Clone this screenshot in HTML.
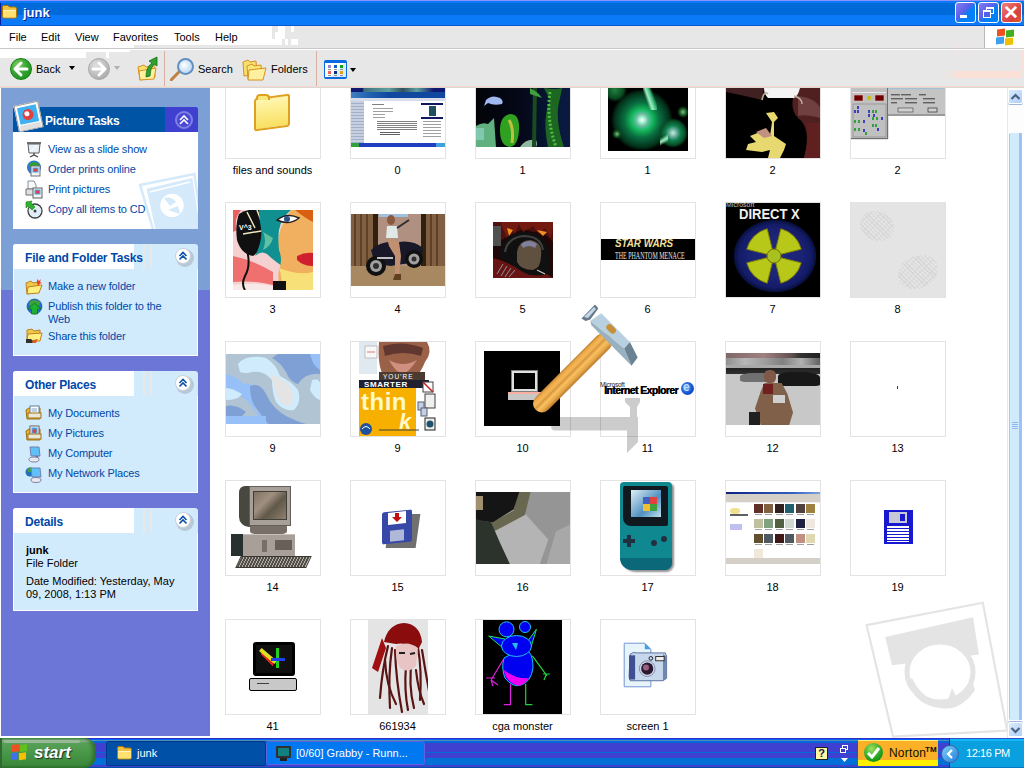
<!DOCTYPE html><html><head><meta charset="utf-8"><style>
*{margin:0;padding:0;box-sizing:border-box}
html,body{width:1024px;height:768px;overflow:hidden;background:#fff;font-family:"Liberation Sans",sans-serif;font-size:11px;color:#000;position:relative}
div,span,svg{position:absolute}
.t{white-space:nowrap;line-height:13px}
#title{left:0;top:0;width:1024px;height:26px;background:linear-gradient(to bottom,#9090f8 0,#9090f8 1px,#0a7af8 1px,#0a7af8 3px,#006ad8 3px,#006ad8 15px,#0a7af8 15px,#0a7af8 25px,#0058d0 25px)}
.wb{top:2px;width:21px;height:21px;border:1px solid #fff;border-radius:3px}
#menu{left:0;top:26px;width:1024px;height:22px;background:#e7e7e7}
#tb{left:0;top:50px;width:1024px;height:37px;background:#e7e7e7}
#left{left:1px;top:88px;width:209px;height:650px;background:linear-gradient(to bottom,#7ca0d6 0,#7ca0d6 202px,#6c76d6 202px)}
.box{left:13px;width:185px;background:#d2ebfc;border-left:1px solid #fff;border-right:1px solid #fff;border-bottom:1px solid #fff}
.hdr{left:13px;width:185px;height:25px;border-radius:3px 3px 0 0;background:#d2ebfc}
.ht{font-weight:bold;font-size:12px;color:#0048a8;letter-spacing:-0.2px}
.lk{color:#0048a8;font-size:11px;left:48px;letter-spacing:-0.15px}
.th{width:96px;height:96px;border:1px solid #e3e3e3;background:#fff;overflow:hidden}
.lb{width:125px;text-align:center;font-size:11px}
#task{left:0;top:738px;width:1024px;height:30px;background:linear-gradient(to bottom,#3030c8 0,#3030c8 1px,#0060f8 1px,#0060f8 2px,#5090b8 2px,#5090b8 3px,#0068d8 3px,#0068d8 5px,#4040d0 5px,#4040d0 14px,#0068d8 14px,#0068d8 15px,#4040d0 15px,#4040d0 20px,#0070d8 20px,#0070d8 27px,#4040d0 27px,#4040d0 29px,#0050a8 29px)}
</style></head><body>
<div id="title"></div>
<div style="left:0;top:3px;width:1px;height:22px;background:#0020a0"></div>
<svg style="left:1px;top:4px" width="18" height="15" viewBox="0 0 18 15"><path d="M1.5 3 Q1.5 1.5 3 1.5 H7 L8.5 3 H14 Q15.5 3 15.5 4.5 V12.5 Q15.5 14 14 14 H3 Q1.5 14 1.5 12.5 Z" fill="#f0c040" stroke="#b07800"/><path d="M2 6 H15 V12.5 Q15 13.5 14 13.5 H3 Q2 13.5 2 12.5 Z" fill="#ffe070"/><path d="M2.5 6.5 H14.5" stroke="#fff8c0"/></svg>
<div class="t" style="left:23px;top:5px;font-size:13px;font-weight:bold;color:#fff;line-height:16px;text-shadow:1px 1px 0 #0a1878">junk</div>
<div class="wb" style="left:955px;background:linear-gradient(135deg,#8080f8 0,#6060e8 40%,#0080f8 60%,#0080f8 100%)"><div style="left:4px;top:12px;width:7px;height:3px;background:#fff"></div></div>
<div class="wb" style="left:978px;background:linear-gradient(135deg,#8080f8 0,#6060e8 40%,#0080f8 60%,#0080f8 100%)"><div style="left:7px;top:4px;width:8px;height:7px;border:1px solid #fff;border-top-width:2px"></div><div style="left:4px;top:7px;width:8px;height:8px;border:1px solid #fff;border-top-width:2px;background:#5060e8"></div></div>
<div class="wb" style="left:1001px;background:linear-gradient(135deg,#f08080 0,#e05050 45%,#d84040 70%,#e06020 100%)"><span style="left:1px;top:0px;font-size:19px;line-height:19px;color:#fff;font-weight:bold">&#x2715;</span></div>
<div id="menu"></div>
<div style="left:0px;top:26px;width:134px;height:22px;background:#fff"></div>
<div style="left:134px;top:26px;width:138px;height:19px;background:#fff"></div>
<div style="left:278px;top:26px;width:7px;height:13px;background:#fff"></div>
<div style="left:275px;top:32px;width:3px;height:7px;background:#fff"></div>
<div style="left:272px;top:39px;width:10px;height:6px;background:#fff"></div>
<div style="left:285px;top:39px;width:3px;height:6px;background:#fff"></div>
<div style="left:291px;top:26px;width:3px;height:6px;background:#fff"></div>
<div style="left:291px;top:39px;width:7px;height:6px;background:#fff"></div>
<div style="left:0;top:48px;width:1024px;height:1px;background:#c8c8c8"></div>
<div style="left:0;top:49px;width:1024px;height:1px;background:#fff"></div>
<div class="t" style="left:9px;top:31px">File</div>
<div class="t" style="left:41px;top:31px">Edit</div>
<div class="t" style="left:75px;top:31px">View</div>
<div class="t" style="left:113px;top:31px">Favorites</div>
<div class="t" style="left:174px;top:31px">Tools</div>
<div class="t" style="left:215px;top:31px">Help</div>
<div style="left:984px;top:26px;width:1px;height:22px;background:#b8b8b8"></div>
<div style="left:985px;top:26px;width:39px;height:22px;background:#fff"></div>
<div style="left:997px;top:29px;width:8px;height:7px;background:#f05020;transform:skewY(-8deg)"></div>
<div style="left:1006px;top:30px;width:8px;height:7px;background:#40b020;transform:skewY(-8deg)"></div>
<div style="left:996px;top:37px;width:8px;height:7px;background:#40a0f0;transform:skewY(-8deg)"></div>
<div style="left:1005px;top:38px;width:8px;height:7px;background:#f0c000;transform:skewY(-8deg)"></div>
<div id="tb"></div>
<div style="left:0;top:50px;width:86px;height:8px;background:#fff"></div>
<div style="left:86px;top:50px;width:44px;height:2px;background:#fff"></div><div style="left:106px;top:52px;width:3px;height:6px;background:#fff"></div>
<div style="left:0;top:86px;width:1024px;height:1px;background:#f8d8c8"></div>
<div style="left:0;top:87px;width:1024px;height:1px;background:#d8d8d8"></div>
<div style="left:10px;top:58px;width:22px;height:22px;border-radius:50%;background:radial-gradient(circle at 35% 30%,#80d060 0,#30a030 50%,#109010 100%);border:1px solid #108010"></div>
<svg style="left:10px;top:58px" width="22" height="22"><path d="M11 5 L5 11 L11 17 M5 11 L17 11" stroke="#fff" stroke-width="3" fill="none" stroke-linecap="round" stroke-linejoin="round"/></svg>
<div class="t" style="left:36px;top:63px">Back</div>
<svg style="left:69px;top:66px" width="6" height="4"><path d="M0 0 L6 0 L3 4 Z" fill="#000"/></svg>
<div style="left:88px;top:58px;width:22px;height:22px;border-radius:50%;background:radial-gradient(circle at 35% 30%,#e0e0e0 0,#b8b8b8 60%,#a0a0a0 100%);border:1px solid #a8a8a8"></div>
<svg style="left:88px;top:58px" width="22" height="22"><path d="M11 5 L17 11 L11 17 M17 11 L5 11" stroke="#fff" stroke-width="3" fill="none" stroke-linecap="round" stroke-linejoin="round"/></svg>
<svg style="left:114px;top:66px" width="6" height="4"><path d="M0 0 L6 0 L3 4 Z" fill="#b0b0b0"/></svg>
<svg style="left:136px;top:55px" width="24" height="27" viewBox="0 0 24 27"><path d="M2 12 L8 10 L10 12 L18 10 L19 22 L4 25 Z" fill="#f8e070" stroke="#d89020" stroke-width="1"/><path d="M3 16 L20 13 L18 24 L4 25 Z" fill="#fff0a0" stroke="#d89020" stroke-width="1"/><path d="M10 22 Q10 12 16 8 L13 6 L21 2 L21 11 L18 9 Q14 13 14 21 Z" fill="#30a030" stroke="#107010" stroke-width="0.8"/></svg>
<div style="left:164px;top:51px;width:1px;height:35px;background:#d8b0a0"></div>
<div style="left:177px;top:58px;width:17px;height:17px;border-radius:50%;background:radial-gradient(circle at 40% 40%,#fff 0,#c8e0f8 60%);border:2px solid #6090c0"></div>
<svg style="left:170px;top:71px" width="10" height="10"><path d="M9 1 L1 9" stroke="#c08040" stroke-width="3" stroke-linecap="round"/></svg>
<div class="t" style="left:198px;top:63px">Search</div>
<svg style="left:242px;top:59px" width="26" height="23" viewBox="0 0 26 23"><path d="M1 3 L6 1 L8 3 L14 2 L15 15 L2 17 Z" fill="#f8e070" stroke="#d89020"/><path d="M5 7 L10 5 L12 7 L19 6 L20 18 L6 20 Z" fill="#f8e878" stroke="#d89020"/><path d="M7 11 L24 9 L21 21 L6 21 Z" fill="#fff0a0" stroke="#d89020"/></svg>
<div class="t" style="left:271px;top:63px">Folders</div>
<div style="left:316px;top:51px;width:1px;height:35px;background:#d8b0a0"></div>
<div style="left:324px;top:60px;width:23px;height:19px;background:linear-gradient(135deg,#fff 55%,#d8ecfc 56%);border:1px solid #0a6ae0;border-top-width:3px;border-bottom-width:2px;border-radius:2px"></div>
<div style="left:328px;top:65px;width:3px;height:3px;background:#a080d0"></div><div style="left:328px;top:69px;width:3px;height:1px;background:#909090"></div>
<div style="left:334px;top:65px;width:3px;height:3px;background:#0a60d0"></div><div style="left:334px;top:69px;width:3px;height:1px;background:#909090"></div>
<div style="left:340px;top:65px;width:3px;height:3px;background:#10a020"></div><div style="left:340px;top:69px;width:3px;height:1px;background:#909090"></div>
<div style="left:328px;top:71px;width:3px;height:3px;background:#f06060"></div><div style="left:328px;top:75px;width:3px;height:1px;background:#909090"></div>
<div style="left:334px;top:71px;width:3px;height:3px;background:#083080"></div><div style="left:334px;top:75px;width:3px;height:1px;background:#909090"></div>
<div style="left:340px;top:71px;width:3px;height:3px;background:#e0a010"></div><div style="left:340px;top:75px;width:3px;height:1px;background:#909090"></div>
<svg style="left:350px;top:68px" width="6" height="4"><path d="M0 0 L6 0 L3 4 Z" fill="#000"/></svg>
<div style="left:954px;top:71px;width:67px;height:7px;background:#fbe0d8"></div><div style="left:947px;top:71px;width:3px;height:7px;background:#fbe0d8"></div><div style="left:1021px;top:50px;width:3px;height:21px;background:#fbe0d8"></div><div style="left:957px;top:45px;width:3px;height:2px;background:#fbe0d8"></div><div style="left:963px;top:45px;width:3px;height:2px;background:#fbe0d8"></div><div style="left:957px;top:50px;width:3px;height:2px;background:#fbe0d8"></div><div style="left:963px;top:50px;width:3px;height:2px;background:#fbe0d8"></div>
<div id="left"></div>
<div style="left:0;top:88px;width:1px;height:650px;background:#fff"></div>
<div style="left:13px;top:107px;width:185px;height:25px;background:#0054a6;border-radius:3px 3px 0 0"></div>
<div style="left:165px;top:107px;width:33px;height:25px;background:#4040d0;border-radius:0 3px 0 0"></div>
<div style="left:175px;top:111px;width:18px;height:18px;border-radius:50%;border:2px solid #8080e0;background:#4848d8"></div>
<svg style="left:178px;top:114px" width="12" height="12"><path d="M2 6 L6 2 L10 6 M2 10 L6 6 L10 10" stroke="#fff" stroke-width="1.6" fill="none"/></svg>
<div class="t ht" style="left:45px;top:115px;color:#fff">Picture Tasks</div>
<div style="left:13px;top:132px;width:185px;height:97px;background:#fff"></div>
<div style="left:16px;top:103px;width:25px;height:27px;background:#fff;border:1px solid #a0a0a0;transform:rotate(-12deg)"><div style="left:2px;top:2px;width:19px;height:17px;background:#40b0f0"></div><div style="left:6px;top:5px;width:11px;height:11px;border-radius:50%;background:#e04040"></div><div style="left:8px;top:7px;width:5px;height:5px;border-radius:50%;background:#fff"></div><div style="left:1px;top:20px;width:21px;height:5px;background:#e0e0e0"></div></div>
<svg style="left:13px;top:132px" width="185" height="97" viewBox="13 132 185 97"><path d="M140.1 184.9 L194.4 174.1 L202 228 L153.4 231 Z" fill="none" stroke="#d4eafa" stroke-width="2.5"/><path d="M146.6 188.8 L192.4 178 L200 229 L155.4 229 Z" fill="#d4eafa"/><path d="M150 192 L190 182" stroke="#fff" stroke-width="1.5"/><circle cx="172" cy="205.4" r="11.7" fill="#fff"/><path d="M164 198 Q172 196 176 202 L170 206 Z M168 210 L178 206 L180 214 Z" fill="#d4eafa"/></svg>
<div class="t lk" style="top:143px">View as a slide show</div>
<div class="t lk" style="top:163px">Order prints online</div>
<div class="t lk" style="top:183px">Print pictures</div>
<div class="t lk" style="top:203px">Copy all items to CD</div>
<svg style="left:26px;top:141px" width="16" height="17" viewBox="0 0 16 17"><rect x="1" y="1" width="14" height="2" fill="#707070"/><path d="M2 3 H14 L13 12 H3 Z" fill="#e8f0f8" stroke="#606060"/><path d="M4 11 L11 4" stroke="#fff"/><path d="M8 12 V14 M8 14 L4 16 M8 14 L12 16" stroke="#404040" stroke-width="1.3"/></svg>
<svg style="left:26px;top:160px" width="17" height="17" viewBox="0 0 17 17"><circle cx="8" cy="7.5" r="7" fill="#2a7ad0"/><path d="M3 4 Q8 0 13 4 L12 7 Q8 5 5 8 Z" fill="#30a030"/><rect x="5" y="6" width="9" height="10" fill="#f4f4f4" stroke="#707070"/><rect x="6.5" y="7.5" width="6" height="5" fill="#4aa0e0"/><circle cx="9.5" cy="10" r="1.8" fill="#e04040"/></svg>
<svg style="left:25px;top:180px" width="18" height="19" viewBox="0 0 18 19"><path d="M3 1 H9 L11 5 V9 H3 Z" fill="#f8f8f8" stroke="#8090a0"/><path d="M1 9 H12 V15 H1 Z" fill="#e0e0e0" stroke="#707070"/><rect x="8" y="8" width="9" height="10" fill="#f4f4f4" stroke="#606060"/><rect x="9.5" y="9.5" width="6" height="5" fill="#4aa0e0"/><circle cx="12.5" cy="12" r="1.8" fill="#e04040"/></svg>
<svg style="left:25px;top:200px" width="18" height="19" viewBox="0 0 18 19"><circle cx="10" cy="11" r="7" fill="#e0eef8" stroke="#404040" stroke-width="1.3"/><circle cx="10" cy="11" r="1.5" fill="#404040"/><path d="M1 2 L7 1 L6 3 L10 7 L7 10 L3 6 L1 8 Z" fill="#30b030" stroke="#108010" stroke-width="0.6"/></svg>
<div style="left:13px;top:244px;width:185px;height:25px;background:#d2ebfc;border-radius:3px 3px 0 0"></div>
<div style="left:13px;top:244px;width:121px;height:25px;background:#fff;border-radius:3px 0 0 0"></div>
<div style="left:143px;top:244px;width:2px;height:25px;background:#e8e8e8"></div>
<div style="left:150px;top:244px;width:2px;height:25px;background:#e8e8e8"></div>
<div class="t ht" style="left:25px;top:252px">File and Folder Tasks</div>
<div style="left:176px;top:249px;width:18px;height:18px;border-radius:50%;background:#b8c8d8"></div>
<div style="left:175px;top:248px;width:16px;height:16px;border-radius:50%;background:#fff;border:1px solid #c8d0d8"></div>
<svg style="left:177px;top:250px" width="12" height="12"><path d="M2.5 6 L6 2.5 L9.5 6 M2.5 9.5 L6 6 L9.5 9.5" stroke="#0a50a8" stroke-width="1.6" fill="none"/></svg>
<div style="left:13px;top:269px;width:185px;height:87px;background:#d2ebfc;border:1px solid #fff;border-top:0"></div>
<div class="t lk" style="top:280px">Make a new folder</div>
<div class="t lk" style="top:300px">Publish this folder to the</div>
<div class="t lk" style="top:313px">Web</div>
<div class="t lk" style="top:330px">Share this folder</div>
<svg style="left:25px;top:278px" width="18" height="17" viewBox="0 0 18 17"><path d="M1 5 L6 3 L8 5 L14 4 L14 14 L2 16 Z" fill="#f0c848" stroke="#c08020"/><path d="M3 9 L17 7 L14 15 L2 16 Z" fill="#fff080" stroke="#c08020"/><path d="M12 1 L14 3 L16 1 L15 4 L17 5 L14 6 L13 8 L12 5 Z" fill="#f04020"/></svg>
<svg style="left:26px;top:298px" width="17" height="18" viewBox="0 0 17 18"><circle cx="8.5" cy="8.5" r="7.5" fill="#2070d0" stroke="#204080" stroke-width="0.6"/><path d="M3 4 Q8 0 14 4 L13 8 L8 6 L4 9 Z" fill="#40a040"/><path d="M8.5 5 L15 11 H11.5 V16 H5.5 V11 H2 Z" fill="#20b030" stroke="#0a7010" stroke-width="0.7"/></svg>
<svg style="left:25px;top:328px" width="18" height="16" viewBox="0 0 18 16"><path d="M2 2 L7 1 L9 3 L15 2 L15 12 L2 13 Z" fill="#f0c848" stroke="#c08020"/><path d="M3 6 L17 5 L15 13 L2 13 Z" fill="#fff080" stroke="#c08020"/><path d="M1 11 H6 L8 13 L12 12 L10 15 H1 Z" fill="#303030"/><path d="M8 12 L13 11 L11 15 H7 Z" fill="#e06020"/></svg>
<div style="left:13px;top:371px;width:185px;height:25px;background:#d2ebfc;border-radius:3px 3px 0 0"></div>
<div style="left:13px;top:371px;width:121px;height:25px;background:#fff;border-radius:3px 0 0 0"></div>
<div style="left:143px;top:371px;width:2px;height:25px;background:#e8e8e8"></div>
<div style="left:150px;top:371px;width:2px;height:25px;background:#e8e8e8"></div>
<div class="t ht" style="left:25px;top:379px">Other Places</div>
<div style="left:176px;top:376px;width:18px;height:18px;border-radius:50%;background:#b8c8d8"></div>
<div style="left:175px;top:375px;width:16px;height:16px;border-radius:50%;background:#fff;border:1px solid #c8d0d8"></div>
<svg style="left:177px;top:377px" width="12" height="12"><path d="M2.5 6 L6 2.5 L9.5 6 M2.5 9.5 L6 6 L9.5 9.5" stroke="#0a50a8" stroke-width="1.6" fill="none"/></svg>
<div style="left:13px;top:396px;width:185px;height:97px;background:#d2ebfc;border:1px solid #fff;border-top:0"></div>
<div class="t lk" style="top:407px">My Documents</div>
<div class="t lk" style="top:427px">My Pictures</div>
<div class="t lk" style="top:447px">My Computer</div>
<div class="t lk" style="top:467px">My Network Places</div>
<svg style="left:25px;top:405px" width="18" height="16" viewBox="0 0 18 16"><path d="M1 5 L4 3 H15 V14 H2 Z" fill="#f0b030" stroke="#a07010"/><rect x="5" y="1" width="9" height="9" fill="#fff" stroke="#6080a0"/><path d="M6.5 4 H12 M6.5 6 H12" stroke="#80a0c0"/><rect x="3" y="8" width="13" height="5" fill="#e8e8d8" stroke="#a07010"/></svg>
<svg style="left:25px;top:425px" width="18" height="17" viewBox="0 0 18 17"><path d="M1 6 L4 4 H15 V15 H2 Z" fill="#f0b030" stroke="#a07010"/><rect x="5" y="1" width="9" height="9" fill="#fff" stroke="#606060"/><rect x="6.5" y="2.5" width="6" height="6" fill="#40a0f0"/><circle cx="9.5" cy="6" r="2" fill="#e04040"/><rect x="3" y="9" width="13" height="5" fill="#e8e8d8" stroke="#a07010"/></svg>
<svg style="left:27px;top:446px" width="15" height="17" viewBox="0 0 15 17"><path d="M3 1 H12 L13 10 H4 Z" fill="#60c0f8" stroke="#7080b0"/><path d="M9 10 L11 12" stroke="#6060a0" stroke-width="2"/><ellipse cx="7" cy="13.5" rx="5" ry="2.5" fill="#e8e8f0" stroke="#8080a0"/></svg>
<svg style="left:25px;top:466px" width="18" height="17" viewBox="0 0 18 17"><circle cx="5" cy="6" r="4.5" fill="#2070c0"/><path d="M2 3 Q5 0 9 3 L7 6 L3 6 Z" fill="#40a040"/><path d="M6 2 H15 L16 11 H7 Z" fill="#60c0f8" stroke="#7080b0"/><ellipse cx="11" cy="14" rx="5" ry="2.5" fill="#e8e8f0" stroke="#8080a0"/></svg>
<div style="left:13px;top:508px;width:185px;height:25px;background:#d2ebfc;border-radius:3px 3px 0 0"></div>
<div style="left:13px;top:508px;width:121px;height:25px;background:#fff;border-radius:3px 0 0 0"></div>
<div style="left:143px;top:508px;width:2px;height:25px;background:#e8e8e8"></div>
<div style="left:150px;top:508px;width:2px;height:25px;background:#e8e8e8"></div>
<div class="t ht" style="left:25px;top:516px">Details</div>
<div style="left:176px;top:513px;width:18px;height:18px;border-radius:50%;background:#b8c8d8"></div>
<div style="left:175px;top:512px;width:16px;height:16px;border-radius:50%;background:#fff;border:1px solid #c8d0d8"></div>
<svg style="left:177px;top:514px" width="12" height="12"><path d="M2.5 6 L6 2.5 L9.5 6 M2.5 9.5 L6 6 L9.5 9.5" stroke="#0a50a8" stroke-width="1.6" fill="none"/></svg>
<div style="left:13px;top:533px;width:185px;height:78px;background:#d2ebfc;border:1px solid #fff;border-top:0"></div>
<div class="t" style="left:26px;top:544px;font-weight:bold">junk</div>
<div class="t" style="left:26px;top:557px">File Folder</div>
<div class="t" style="left:26px;top:575px">Date Modified: Yesterday, May</div>
<div class="t" style="left:26px;top:588px">09, 2008, 1:13 PM</div>
<div style="left:1px;top:736px;width:209px;height:2px;background:#fff"></div>
<div style="left:210px;top:88px;width:797px;height:650px;background:#fff;overflow:hidden" id="content">
<svg style="left:640px;top:502px" width="160" height="150" viewBox="850 590 160 150"><path d="M866.6 625.2 L982.8 602.7 L1007.2 730.6 L893 736.5 Z" fill="none" stroke="#e4e4e4" stroke-width="2.2"/><path d="M885.2 636.9 L973 617.3 L978.9 654.5 L892 665.2 Z" fill="#e4e4e4"/><ellipse cx="940" cy="672" rx="33" ry="30" fill="#fff" stroke="#e4e4e4" stroke-width="5"/><path d="M912 678 Q925 705 948 700 L952 688 L958 700 Q968 692 972 680 L975 690 Q960 712 940 708 Q915 705 908 682 Z" fill="#e4e4e4"/></svg>
<div class="th" style="left:15px;top:-25px"></div>
<div class="t lb" style="left:0px;top:76px">files and sounds</div>
<div class="th" style="left:140px;top:-25px"></div>
<div class="t lb" style="left:125px;top:76px">0</div>
<div class="th" style="left:265px;top:-25px"></div>
<div class="t lb" style="left:250px;top:76px">1</div>
<div class="th" style="left:390px;top:-25px"></div>
<div class="t lb" style="left:375px;top:76px">1</div>
<div class="th" style="left:515px;top:-25px"></div>
<div class="t lb" style="left:500px;top:76px">2</div>
<div class="th" style="left:640px;top:-25px"></div>
<div class="t lb" style="left:625px;top:76px">2</div>
<div class="th" style="left:15px;top:114px"></div>
<div class="t lb" style="left:0px;top:215px">3</div>
<div class="th" style="left:140px;top:114px"></div>
<div class="t lb" style="left:125px;top:215px">4</div>
<div class="th" style="left:265px;top:114px"></div>
<div class="t lb" style="left:250px;top:215px">5</div>
<div class="th" style="left:390px;top:114px"></div>
<div class="t lb" style="left:375px;top:215px">6</div>
<div class="th" style="left:515px;top:114px"></div>
<div class="t lb" style="left:500px;top:215px">7</div>
<div class="th" style="left:640px;top:114px"></div>
<div class="t lb" style="left:625px;top:215px">8</div>
<div class="th" style="left:15px;top:253px"></div>
<div class="t lb" style="left:0px;top:354px">9</div>
<div class="th" style="left:140px;top:253px"></div>
<div class="t lb" style="left:125px;top:354px">9</div>
<div class="th" style="left:265px;top:253px"></div>
<div class="t lb" style="left:250px;top:354px">10</div>
<div class="th" style="left:390px;top:253px"></div>
<div class="t lb" style="left:375px;top:354px">11</div>
<div class="th" style="left:515px;top:253px"></div>
<div class="t lb" style="left:500px;top:354px">12</div>
<div class="th" style="left:640px;top:253px"></div>
<div class="t lb" style="left:625px;top:354px">13</div>
<div class="th" style="left:15px;top:392px"></div>
<div class="t lb" style="left:0px;top:493px">14</div>
<div class="th" style="left:140px;top:392px"></div>
<div class="t lb" style="left:125px;top:493px">15</div>
<div class="th" style="left:265px;top:392px"></div>
<div class="t lb" style="left:250px;top:493px">16</div>
<div class="th" style="left:390px;top:392px"></div>
<div class="t lb" style="left:375px;top:493px">17</div>
<div class="th" style="left:515px;top:392px"></div>
<div class="t lb" style="left:500px;top:493px">18</div>
<div class="th" style="left:640px;top:392px"></div>
<div class="t lb" style="left:625px;top:493px">19</div>
<div class="th" style="left:15px;top:531px"></div>
<div class="t lb" style="left:0px;top:632px">41</div>
<div class="th" style="left:140px;top:531px"></div>
<div class="t lb" style="left:125px;top:632px">661934</div>
<div class="th" style="left:265px;top:531px"></div>
<div class="t lb" style="left:250px;top:632px">cga monster</div>
<div class="th" style="left:390px;top:531px"></div>
<div class="t lb" style="left:375px;top:632px">screen 1</div>
<div style="left:44px;top:8px;width:36px;height:33px;background:linear-gradient(to bottom,#fff6b0,#f8e060);border:2px solid #e0a020;border-radius:3px;transform:skewY(-8deg)"></div>
<div style="left:46px;top:6px;width:14px;height:6px;background:#f8e878;border:2px solid #e0a020;border-bottom:0;border-radius:4px 4px 0 0"></div>
<div style="left:141px;top:-12px;width:94px;height:16px;background:linear-gradient(to right,#101870 0,#101870 12%,#407080 14%,#60a0a0 40%,#305060 55%,#60a0a0 70%,#101870 88%)"></div>
<div style="left:141px;top:4px;width:94px;height:6px;background:linear-gradient(to right,#4080c0 0,#2060b0 20%,#1048a0 40%,#1048a0 100%)"></div>
<div style="left:141px;top:10px;width:94px;height:3px;background:#d8dce8"></div>
<div style="left:141px;top:13px;width:13px;height:42px;background:#c8d0e0"></div>
<div style="left:154px;top:13px;width:81px;height:42px;background:#fff"></div>
<div style="left:162px;top:16px;width:12px;height:1px;background:#808080"></div>
<div style="left:163px;top:20px;width:12px;height:12px;background:repeating-linear-gradient(to bottom,#a0a0a0 0,#a0a0a0 1px,#fff 1px,#fff 3px)"></div>
<div style="left:175px;top:20px;width:8px;height:5px;background:repeating-linear-gradient(to bottom,#a0a0a0 0,#a0a0a0 1px,#fff 1px,#fff 3px)"></div>
<div style="left:167px;top:33px;width:40px;height:10px;background:repeating-linear-gradient(to bottom,#808080 0,#808080 1px,#fff 1px,#fff 2px)"></div>
<div style="left:170px;top:44px;width:20px;height:3px;background:repeating-linear-gradient(to bottom,#606060 0,#606060 1px,#fff 1px,#fff 2px)"></div>
<div style="left:211px;top:15px;width:22px;height:2px;background:#101860"></div>
<div style="left:219px;top:18px;width:7px;height:10px;background:#205060"></div>
<div style="left:211px;top:29px;width:22px;height:2px;background:#101860"></div>
<div style="left:213px;top:33px;width:18px;height:18px;background:repeating-linear-gradient(to bottom,#a0a0a0 0,#a0a0a0 1px,#fff 1px,#fff 3px)"></div>
<div style="left:141px;top:13px;width:13px;height:42px;background:repeating-linear-gradient(to bottom,#c8d0e0 0,#c8d0e0 2px,#a0b0c8 2px,#a0b0c8 3px)"></div>
<div style="left:141px;top:55px;width:94px;height:4px;background:linear-gradient(to right,#30a040 0,#30a040 8px,#2040c0 8px,#2040c0 85px,#40a0e0 85px)"></div>
<div style="left:266px;top:0px;width:94px;height:59px;background:linear-gradient(to right,#020408 0,#040818 50%,#081838 80%,#0a1a40 100%)"></div>
<svg style="left:266px;top:0px" width="94" height="59" viewBox="0 0 94 59"><path d="M10 12 Q16 6 24 10 Q28 13 26 16 Q18 18 12 15 L8 18 Z" fill="#a0b8f0"/><path d="M0 38 Q6 34 12 36 L18 30 L20 59 H0 Z" fill="#60b080"/><path d="M0 40 H8 V52 H0 Z" fill="#80c8b0"/><path d="M34 26 Q44 26 43 42 Q42 58 34 59 Q24 58 24 42 Q24 28 34 26 Z" fill="#30a020"/><path d="M33 32 Q38 40 36 55" stroke="#c0c040" stroke-width="3" fill="none"/><path d="M44 59 Q50 50 60 52 Q62 56 60 59 Z" fill="#90b8a0"/><path d="M57 0 L61 0 L60 59 L56 59 Z" fill="#1a4a20"/><path d="M68 0 Q80 2 86 0 L84 10 Q78 30 88 59 L72 59 Q66 30 74 12 Z" fill="#207020" opacity=".9"/><path d="M74 4 Q70 30 80 59" stroke="#50c040" stroke-width="3" fill="none" stroke-dasharray="2 2"/><path d="M54 0 Q62 4 66 10 Q60 8 54 6 Z" fill="#40a040"/></svg>
<div style="left:398px;top:0px;width:80px;height:63px;background:radial-gradient(circle 5px at 9px 46px,#80c080 0,#105020 60%,rgba(0,0,0,0) 100%),radial-gradient(circle 6px at 75px 24px,#80c080 0,#105020 60%,rgba(0,0,0,0) 100%),radial-gradient(circle 12px at 7px 2px,#208040 0,#0a4a20 70%,rgba(0,0,0,0) 100%),radial-gradient(circle 15px at 65px 45px,#c0f0e0 0,#70b0a0 25%,#108050 50%,#085028 80%,rgba(0,40,20,0) 100%),radial-gradient(circle 31px at 34px 32px,#f8ffff 0,#a0f0d0 10%,#70b8a0 20%,#20c070 30%,#10a050 42%,#0a7040 56%,#065030 72%,#033018 88%,rgba(0,0,0,0) 100%),#000"></div>
<div style="left:433px;top:0px;width:14px;height:22px;background:linear-gradient(70deg,rgba(0,0,0,0) 30%,#a0f0c0 45%,#40c080 60%,rgba(0,0,0,0) 75%)"></div>
<div style="left:450px;top:44px;width:8px;height:16px;background:linear-gradient(-30deg,rgba(0,0,0,0) 30%,#a0f0c0 50%,rgba(0,0,0,0) 70%)"></div>
<div style="left:516px;top:0px;width:94px;height:70px;background:#000"></div>
<svg style="left:516px;top:0px" width="94" height="70" viewBox="0 0 94 70"><path d="M0 0 H38 L36 12 Q20 8 0 4 Z" fill="#402020"/><path d="M70 0 H94 V70 H78 Q86 40 72 30 Q62 20 70 0 Z" fill="#502020"/><path d="M72 8 Q90 10 94 20 V30 Q80 26 72 28 Z" fill="#704040"/><path d="M80 35 H94 V70 H78 Q84 50 80 35 Z" fill="#602020"/><path d="M38 0 H74 Q72 8 68 10 H42 Q38 6 38 0 Z" fill="#f4f4f4"/><path d="M36 12 Q38 2 42 6 M68 8 Q76 10 76 16" stroke="#c0b0a0" stroke-width="1.5" fill="none"/><path d="M40 25 L48 24 L52 30 L48 34 L48 48 L60 56 L58 62 L54 70 H42 L44 62 L36 64 L20 62 L22 56 L30 54 L24 48 L34 44 L44 48 L46 34 Z" fill="#e8d870"/><path d="M30 44 L40 40 L46 48 L38 50 Z" fill="#c09080"/></svg>
<svg style="left:641px;top:0px" width="94" height="52" viewBox="0 0 94 52"><rect x="0" y="0" width="37" height="51" fill="#c0c0c0"/><rect x="36" y="0" width="1.2" height="51" fill="#707070"/><rect x="0" y="50" width="37" height="1.2" fill="#707070"/><rect x="1" y="4" width="34" height="1" fill="#e8e8e8"/><rect x="3" y="7" width="9" height="6" fill="#700000" stroke="#e0c0c0" stroke-width="0.6"/><rect x="16" y="8" width="4" height="4" fill="#c8c020"/><rect x="24" y="7" width="9" height="6" fill="#700000" stroke="#e0c0c0" stroke-width="0.6"/><rect x="2" y="16" width="33" height="33" fill="#c0c0c0" stroke="#808080" stroke-width="0.6"/><g fill="#4040c0"><rect x="6" y="18" width="2" height="3"/><rect x="3" y="22" width="2" height="3"/><rect x="6" y="22" width="2" height="3"/><rect x="17" y="22" width="2" height="3"/><rect x="17" y="26" width="2" height="3"/><rect x="12" y="32" width="2" height="3"/><rect x="22" y="26" width="2" height="3"/><rect x="30" y="29" width="2" height="3"/><rect x="26" y="40" width="2" height="3"/><rect x="12" y="41" width="2" height="3"/></g><g fill="#30a040"><rect x="21" y="22" width="2" height="3"/><rect x="24" y="22" width="2" height="3"/><rect x="21" y="29" width="2" height="3"/><rect x="25" y="29" width="2" height="3"/><rect x="3" y="32" width="2" height="3"/><rect x="7" y="32" width="2" height="3"/><rect x="21" y="36" width="2" height="3"/><rect x="24" y="36" width="2" height="3"/><rect x="3" y="40" width="2" height="3"/><rect x="7" y="40" width="2" height="3"/><rect x="14" y="44" width="2" height="3"/></g><rect x="37" y="0" width="57" height="27" fill="#c4c4c4"/><rect x="37" y="26.5" width="57" height="1.2" fill="#707070"/><rect x="37" y="0" width="57" height="1" fill="#a0c0d8"/><g fill="#606060"><rect x="40" y="6" width="9" height="1.4"/><rect x="50" y="6" width="10" height="1.4"/><rect x="68" y="6" width="7" height="1.4"/><rect x="40" y="10" width="12" height="1.4"/><rect x="54" y="10" width="12" height="1.4"/><rect x="72" y="10" width="12" height="1.4"/><rect x="40" y="14" width="6" height="1.4"/><rect x="54" y="14" width="12" height="1.4"/><rect x="72" y="14" width="12" height="1.4"/></g><rect x="47" y="20" width="15" height="4" fill="#d0d0d0" stroke="#404040" stroke-width="0.6"/><rect x="77" y="20" width="9" height="4" fill="#d0d0d0" stroke="#404040" stroke-width="0.8"/></svg>
<svg style="left:23px;top:122px" width="80" height="80" viewBox="0 0 80 80"><rect width="80" height="80" fill="#f4d0d0"/><path d="M0 46 Q20 50 40 62 V75 Q20 70 0 72 Z" fill="#f07070"/><path d="M0 75 Q20 72 40 76 V80 H0 Z" fill="#f8e8e8"/><path d="M0 0 H8 Q0 10 4 20 L0 22 Z" fill="#e86060"/><path d="M6 4 Q14 -2 30 0 L34 18 Q32 38 20 46 Q8 44 4 30 Q2 14 6 4 Z" fill="#101010"/><path d="M10 24 L34 20 M14 2 L22 18 M24 0 L30 16" stroke="#f0e8c0" stroke-width="1.5"/><text x="6" y="20" font-size="7" fill="#fff" font-family="Liberation Sans" font-weight="bold">V^3</text><path d="M26 0 H58 Q48 8 46 20 Q44 34 50 46 Q54 54 52 58 Q40 50 34 44 Q28 40 22 46 Q30 30 28 18 Q26 8 26 0 Z" fill="#109090"/><path d="M30 22 Q34 30 30 40 Q38 36 40 28 Z" fill="#60c0a0"/><path d="M58 0 H80 V80 H48 Q44 70 46 60 Q50 50 46 40 Q44 24 50 14 Q54 6 58 0 Z" fill="#f0b060"/><path d="M62 0 H80 V12 Q72 8 62 0 Z" fill="#d86010"/><path d="M46 58 Q50 68 48 80 H80 V62 Q66 66 46 58 Z" fill="#f8e078"/><path d="M44 10 Q54 2 66 8 Q56 16 44 10 Z" fill="#fff" stroke="#202020" stroke-width="1.4"/><circle cx="54" cy="9" r="3" fill="#305080"/><path d="M64 46 Q72 42 80 43 V56 Q70 56 64 50 Z" fill="#d02030"/><rect x="40" y="71" width="13" height="9" fill="#101010"/><path d="M14 40 Q18 56 12 66 Q8 74 12 80" stroke="#101010" stroke-width="2" fill="none"/></svg>
<svg style="left:141px;top:126px" width="94" height="72" viewBox="0 0 94 72"><rect width="94" height="72" fill="#7a5438"/><rect x="0" y="0" width="22" height="54" fill="#806040"/><path d="M4 0 V54 M10 0 V54 M16 0 V54" stroke="#604028" stroke-width="2"/><rect x="22" y="0" width="5" height="54" fill="#302010"/><rect x="27" y="0" width="43" height="54" fill="#b09080"/><rect x="28" y="0" width="29" height="3" fill="#a0c0e0"/><rect x="70" y="0" width="5" height="54" fill="#302010"/><rect x="75" y="0" width="19" height="54" fill="#806040"/><path d="M80 0 V54 M86 0 V54" stroke="#604028" stroke-width="2"/><rect x="0" y="52" width="94" height="20" fill="#a88860"/><path d="M20 36 Q30 26 48 28 Q62 26 72 34 L70 48 Q50 50 40 52 L24 50 Z" fill="#181828"/><circle cx="25" cy="52" r="10" fill="#101010"/><circle cx="25" cy="52" r="6" fill="#a0a0a0"/><circle cx="25" cy="52" r="3" fill="#303030"/><circle cx="63" cy="45" r="9" fill="#101010"/><circle cx="63" cy="45" r="5.5" fill="#a0a0a0"/><circle cx="63" cy="45" r="2.5" fill="#303030"/><path d="M26 44 H42" stroke="#c0c0c0" stroke-width="2"/><ellipse cx="40" cy="6" rx="4" ry="5" fill="#8a5a40"/><path d="M36 12 H46 L47 24 H35 Z" fill="#e0e8e8"/><path d="M36 24 L48 28 L50 42 L48 62 L44 62 L44 42 L38 32 Z" fill="#c09070"/><path d="M44 60 H50 V66 H42 Z" fill="#604020"/><path d="M46 14 L58 6" stroke="#303030" stroke-width="2"/></svg>
<svg style="left:283px;top:134px" width="60" height="56" viewBox="0 0 60 56"><rect width="60" height="56" fill="#200808"/><path d="M0 0 H60 V20 Q50 8 40 10 Q30 4 20 12 Q10 16 0 24 Z" fill="#501010"/><path d="M8 2 L14 16 L18 6 L22 12 L26 2 L30 10 L40 4 L46 12 L52 6 L58 16 L60 4 V0 H8 Z" fill="#802010" opacity=".7"/><path d="M14 6 L16 14 L20 8 Z M44 8 L50 14 L54 10 Z" fill="#f09020"/><rect x="0" y="4" width="8" height="20" fill="#505050"/><path d="M6 34 Q8 12 30 10 Q52 10 56 30 L58 56 H30 Q20 44 6 34 Z" fill="#101010"/><path d="M12 30 Q14 16 30 14 Q48 14 50 28" stroke="#404040" stroke-width="2" fill="none"/><path d="M24 30 Q26 18 38 18 Q50 20 48 34 Q48 46 40 48 Q28 48 24 40 Z" fill="#605040"/><path d="M28 22 Q36 16 44 22 L42 26 Q36 22 30 26 Z" fill="#8080a0"/><path d="M0 36 Q16 40 30 50 Q40 56 54 52 L60 56 H0 Z" fill="#681414"/><path d="M4 52 L10 42 M8 54 L14 44 M12 55 L18 46 M16 55 L22 48" stroke="#909090" stroke-width="1"/><path d="M44 48 L52 52" stroke="#d0d0d0" stroke-width="1.2"/></svg>
<div style="left:391px;top:151px;width:94px;height:21px;background:#000"></div>
<div class="t" style="left:405px;top:150px;font-size:10px;font-weight:bold;color:#f0e0a0;font-style:italic;line-height:11px;transform:scaleX(0.98);transform-origin:0 0">STAR WARS</div>
<div class="t" style="left:405px;top:162px;font-size:10px;color:#e0e0e0;font-family:'Liberation Serif',serif;line-height:11px;transform:scaleX(0.60);transform-origin:0 0">THE PHANTOM MENACE</div>
<div style="left:516px;top:115px;width:94px;height:94px;background:#000"></div>
<div style="left:524px;top:132px;width:82px;height:72px;background:radial-gradient(ellipse at 50% 50%,#202880 0,#1c2478 40%,#141c68 62%,#081040 70%,rgba(0,0,0,0) 72%)"></div>
<div class="t" style="left:529px;top:118px;font-size:14px;font-weight:bold;color:#f0f0f0;line-height:16px;transform:scaleX(0.93);transform-origin:0 0">DIRECT X</div>
<div class="t" style="left:516px;top:113px;font-size:7px;color:#c0c0c0;line-height:8px">Microsoft</div>
<svg style="left:534px;top:138px" width="60" height="60" viewBox="-30 -30 60 60"><g fill="#b8c818" stroke="#808000" stroke-width="1"><path d="M0 0 L-27.2 -6.8 A28 28 0 0 1 -6.8 -27.2 Z"/><path d="M0 0 L6.8 -27.2 A28 28 0 0 1 27.2 -6.8 Z"/><path d="M0 0 L27.2 6.8 A28 28 0 0 1 6.8 27.2 Z"/><path d="M0 0 L-6.8 27.2 A28 28 0 0 1 -27.2 6.8 Z"/></g><circle cx="0" cy="0" r="7" fill="#a8c020" stroke="#707000"/></svg>
<div style="left:641px;top:115px;width:94px;height:94px;background:#e4e4e4"></div>
<div style="left:650px;top:123px;width:34px;height:30px;background:repeating-linear-gradient(45deg,#c8c8c8 0,#c8c8c8 1px,rgba(0,0,0,0) 1px,rgba(0,0,0,0) 3px),repeating-linear-gradient(-45deg,#d0d0d0 0,#d0d0d0 1px,rgba(0,0,0,0) 1px,rgba(0,0,0,0) 4px);border-radius:40% 60% 40% 60%;opacity:.45"></div>
<div style="left:688px;top:167px;width:40px;height:34px;background:repeating-linear-gradient(45deg,#c8c8c8 0,#c8c8c8 1px,rgba(0,0,0,0) 1px,rgba(0,0,0,0) 3px),repeating-linear-gradient(-45deg,#d0d0d0 0,#d0d0d0 1px,rgba(0,0,0,0) 1px,rgba(0,0,0,0) 4px);border-radius:60% 40% 60% 40%;opacity:.45"></div>
<svg style="left:16px;top:266px" width="94" height="70" viewBox="0 0 94 70"><rect width="94" height="70" fill="#b0c4d4"/><path d="M52 0 H84 Q90 6 94 4 V20 Q80 18 72 30 Q64 28 60 18 Q54 8 46 4 Z" fill="#7ea0d4"/><path d="M84 0 H94 V16 Q88 12 86 6 Z" fill="#98c0f8"/><path d="M0 20 Q10 22 18 30 Q26 28 30 36 Q24 44 30 56 Q40 66 56 66 Q70 66 80 70 H40 Q30 60 24 50 Q16 40 0 36 Z" fill="#98c0f8"/><path d="M24 32 Q34 28 40 40 Q46 54 60 62 Q72 68 80 70 H42 Q36 62 30 54 Q24 46 24 32 Z" fill="#7ea0d4"/><path d="M0 52 Q10 50 20 58 L14 64 H0 Z" fill="#7ea0d4"/><path d="M0 62 H40 V70 H0 Z" fill="#98c0f8"/><path d="M12 10 Q20 0 40 4 Q50 10 54 22 Q66 28 72 36 Q76 48 68 56 Q58 58 50 48 Q46 38 46 26 Q38 16 26 18 Q20 20 14 18 Z" fill="#d0ecfc"/><path d="M44 20 Q56 24 64 32 Q70 44 64 52 Q56 52 52 44 Q48 34 44 20 Z" fill="#e4e4e4"/><path d="M86 26 Q94 24 94 30 V46 Q88 44 84 36 Z" fill="#d0ecfc"/><path d="M0 34 Q6 34 16 40 Q12 46 0 46 Z" fill="#d0ecfc"/></svg>
<svg style="left:149px;top:254px" width="78" height="94" viewBox="0 0 78 94"><rect width="78" height="94" fill="#fff"/><rect x="0" y="0" width="18" height="32" fill="#e0e8f0"/><rect x="6" y="4" width="12" height="12" fill="#f8f8f8" stroke="#c0c0c0"/><path d="M8 10 H16" stroke="#d08080"/><path d="M20 0 H68 Q74 10 66 20 Q62 30 56 36 H26 Q18 26 20 0 Z" fill="#9a6048"/><path d="M24 4 Q44 -2 64 6 L62 14 Q44 8 26 14 Z" fill="#603830"/><path d="M30 18 Q44 26 58 18 Q50 30 44 32 Q36 30 30 18 Z" fill="#d09080"/><path d="M20 30 H66 V38 H20 Z" fill="#4a3a30"/><text x="24" y="36.5" font-size="6.5" fill="#fff" font-family="Liberation Sans" letter-spacing="1">YOU&#8217;RE</text><rect x="0" y="38" width="70" height="8" fill="#202030"/><text x="5" y="45" font-size="8" font-weight="bold" fill="#fff" font-family="Liberation Sans" letter-spacing="0.6">SMARTER</text><rect x="0" y="46" width="57" height="48" fill="#f8b000"/><text x="2" y="68" font-size="24" font-weight="bold" fill="#fff8c8" font-family="Liberation Sans" letter-spacing="0.5">thin</text><text x="40" y="87" font-size="22" font-weight="bold" font-style="italic" fill="#fff8c8" font-family="Liberation Sans">k</text><circle cx="7" cy="87" r="6" fill="#2050a0"/><path d="M3 87 Q7 82 11 87" stroke="#fff" fill="none"/><rect x="64" y="40" width="10" height="10" fill="#fff" stroke="#404040"/><path d="M64 40 L74 50" stroke="#c02020" stroke-width="1.5"/><rect x="66" y="52" width="10" height="14" fill="#f0f0f0" stroke="#404040"/><rect x="59" y="60" width="6" height="8" fill="#c0d0f0" stroke="#606060"/><rect x="62" y="66" width="6" height="8" fill="#c0d0f0" stroke="#606060"/><rect x="66" y="76" width="10" height="12" fill="#f0f0f0" stroke="#202020"/><circle cx="71" cy="82" r="3.5" fill="#205070"/><path d="M20 88 H60" stroke="#404040"/></svg>
<div style="left:274px;top:263px;width:76px;height:75px;background:#000"></div>
<div style="left:302px;top:283px;width:25px;height:20px;background:#000;border:2px solid #e0e0e0;outline:1px solid #808080"></div>
<div style="left:298px;top:304px;width:34px;height:8px;background:#c8c8c8;border-top:2px solid #f8b0a0"></div>
<div class="t" style="left:390px;top:293px;font-size:6.5px;color:#202020;line-height:7px;letter-spacing:-0.2px">Microsoft</div>
<div class="t" style="left:394px;top:296px;font-size:11px;font-weight:bold;color:#000;letter-spacing:-0.6px;line-height:12px;transform:scaleX(0.95);transform-origin:0 0;text-shadow:0.4px 0 0 #000">Internet Explorer</div>
<div style="left:471px;top:294px;width:13px;height:13px;background:radial-gradient(circle at 40% 40%,#60a0f0,#1050d0 60%);border-radius:50%"></div>
<div class="t" style="left:473px;top:292px;font-size:12px;font-weight:bold;color:#c0e0ff;line-height:14px">e</div>
<div style="left:516px;top:265px;width:94px;height:72px;background:#c8c8c8"></div>
<div style="left:516px;top:265px;width:94px;height:5px;background:linear-gradient(to right,#806868,#a08080 40%,#605050 70%,#303030 80%,#202020)"></div>
<div style="left:516px;top:270px;width:94px;height:8px;background:linear-gradient(to right,#909090,#b8b8b8 20%,#a0a0a0 40%,#808080 60%,#b0b0b0 80%,#606060)"></div>
<div style="left:516px;top:277px;width:94px;height:9px;background:linear-gradient(to bottom,#a8a8a8 0,#a8a8a8 3px,#202020 3px,#303030 100%)"></div>
<div style="left:530px;top:285px;width:35px;height:9px;background:#707070;border-radius:40% 40% 20% 20%"></div>
<div style="left:568px;top:284px;width:42px;height:14px;background:#181818;border-radius:30% 40% 10% 10%"></div>
<div style="left:554px;top:282px;width:12px;height:13px;background:#805848;border-radius:40%"></div>
<div style="left:545px;top:295px;width:38px;height:42px;background:#806048;clip-path:polygon(25% 0,70% 0,85% 25%,100% 70%,90% 100%,15% 100%,0 60%,15% 20%)"></div>
<div style="left:553px;top:296px;width:10px;height:10px;background:#702020"></div>
<div style="left:563px;top:307px;width:12px;height:8px;background:#d0d0d0"></div>
<div style="left:539px;top:324px;width:11px;height:13px;background:#202020"></div>
<div style="left:687px;top:298px;width:1px;height:3px;background:#404040"></div>
<div style="left:29px;top:398px;width:14px;height:41px;background:#484840;border-radius:6px 0 0 10px"></div>
<div style="left:39px;top:398px;width:42px;height:40px;background:#a8a098;border:1px solid #606058"></div>
<div style="left:43px;top:403px;width:34px;height:29px;background:linear-gradient(135deg,#807060 0,#a09080 35%,#605848 60%,#908070 100%);border:1px solid #404038"></div>
<div style="left:40px;top:438px;width:37px;height:9px;background:#787068;border-radius:0 0 40% 40%"></div>
<div style="left:21px;top:446px;width:12px;height:22px;background:#283030"></div>
<div style="left:33px;top:446px;width:52px;height:22px;background:#a8a098;border-top:1px solid #c8c0b8"></div>
<div style="left:65px;top:452px;width:17px;height:10px;background:#686058"></div>
<div style="left:52px;top:452px;width:5px;height:12px;background:#787068"></div>
<div style="left:28px;top:468px;width:71px;height:12px;background:repeating-linear-gradient(to right,#505048 0,#505048 2px,#b8b0a8 2px,#b8b0a8 3px);border:1px solid #383830;transform:skewX(-25deg)"></div>
<div style="left:178px;top:426px;width:30px;height:34px;background:#404040;opacity:.75;transform:skewX(-8deg)"></div>
<div style="left:172px;top:423px;width:30px;height:32px;background:#3848a8;border-radius:2px;transform:skewY(-6deg)"></div>
<div style="left:178px;top:424px;width:18px;height:12px;background:#fff;transform:skewY(-6deg)"></div>
<svg style="left:179px;top:424px" width="16" height="12"><path d="M6 1 L10 1 L10 5 L13 5 L8 10 L3 5 L6 5 Z" fill="#c01010"/></svg>
<div style="left:180px;top:442px;width:14px;height:11px;background:#b0b8d8;transform:skewY(-6deg)"></div>
<div style="left:266px;top:404px;width:94px;height:72px;background:#959595"></div>
<div style="left:266px;top:404px;width:94px;height:72px;background:#b4b4b4;clip-path:polygon(19% 52%,52% 30%,77% 66%,68% 100%,30% 100%)"></div>
<div style="left:266px;top:404px;width:94px;height:72px;background:#686850;clip-path:polygon(44% 0,58% 0,52% 32%,20% 54%,14% 44%,40% 26%)"></div>
<div style="left:266px;top:404px;width:94px;height:72px;background:#151515;clip-path:polygon(0 0,46% 0,40% 24%,18% 42%,0 40%)"></div>
<div style="left:266px;top:404px;width:94px;height:72px;background:#2c322c;clip-path:polygon(0 38%,16% 42%,26% 72%,36% 100%,0 100%)"></div>
<div style="left:266px;top:408px;width:7px;height:14px;background:#a09070"></div>
<div style="left:266px;top:404px;width:94px;height:72px;background:#a8a8a8;clip-path:polygon(85% 55%,100% 45%,100% 100%,75% 100%)"></div>
<div style="left:410px;top:394px;width:52px;height:88px;background:#108890;border-radius:4px 4px 8px 14px;box-shadow:2px 2px 2px #909090"></div>
<div style="left:413px;top:398px;width:45px;height:40px;background:#101820;border-radius:2px 2px 2px 8px"></div>
<div style="left:421px;top:402px;width:30px;height:27px;background:linear-gradient(135deg,#e0f0f8,#5090c0 60%,#c0e0f0)"></div>
<div style="left:433px;top:409px;width:14px;height:14px;background:conic-gradient(#e04040 0 25%,#40a040 0 50%,#f0c030 0 75%,#4060c0 0)"></div>
<div style="left:413px;top:447px;width:12px;height:12px;background:#203040;clip-path:polygon(33% 0,66% 0,66% 33%,100% 33%,100% 66%,66% 66%,66% 100%,33% 100%,33% 66%,0 66%,0 33%,33% 33%)"></div>
<div style="left:441px;top:452px;width:6px;height:6px;background:#203040;border-radius:50%"></div>
<div style="left:451px;top:448px;width:6px;height:6px;background:#203040;border-radius:50%"></div>
<div style="left:410px;top:470px;width:52px;height:12px;background:#0a6878;border-radius:0 0 8px 14px"></div>
<div style="left:516px;top:404px;width:94px;height:72px;background:#fff"></div>
<div style="left:516px;top:404px;width:94px;height:2px;background:linear-gradient(to right,#102080,#3060c0 70%,#80a0e0)"></div>
<div style="left:516px;top:406px;width:94px;height:8px;background:#d4d0c8"></div>
<div style="left:516px;top:414px;width:94px;height:1px;background:#f0f0f0"></div>
<div style="left:520px;top:420px;width:10px;height:6px;background:#f0e090;border-radius:40%"></div>
<div style="left:520px;top:426px;width:18px;height:2px;background:#606060"></div>
<div style="left:520px;top:436px;width:12px;height:6px;background:#c0c0f0"></div>
<div style="left:544px;top:416px;width:9px;height:9px;background:#603028"></div>
<div style="left:545px;top:426px;width:7px;height:1px;background:#a0a0a0"></div>
<div style="left:554px;top:416px;width:9px;height:9px;background:#806040"></div>
<div style="left:555px;top:426px;width:7px;height:1px;background:#a0a0a0"></div>
<div style="left:565px;top:416px;width:9px;height:9px;background:#302020"></div>
<div style="left:566px;top:426px;width:7px;height:1px;background:#a0a0a0"></div>
<div style="left:575px;top:416px;width:9px;height:9px;background:#206070"></div>
<div style="left:576px;top:426px;width:7px;height:1px;background:#a0a0a0"></div>
<div style="left:586px;top:416px;width:9px;height:9px;background:#504040"></div>
<div style="left:587px;top:426px;width:7px;height:1px;background:#a0a0a0"></div>
<div style="left:596px;top:416px;width:9px;height:9px;background:#a08040"></div>
<div style="left:597px;top:426px;width:7px;height:1px;background:#a0a0a0"></div>
<div style="left:544px;top:431px;width:9px;height:9px;background:#c0c0a0"></div>
<div style="left:545px;top:441px;width:7px;height:1px;background:#a0a0a0"></div>
<div style="left:554px;top:431px;width:9px;height:9px;background:#80a080"></div>
<div style="left:555px;top:441px;width:7px;height:1px;background:#a0a0a0"></div>
<div style="left:565px;top:431px;width:9px;height:9px;background:#506040"></div>
<div style="left:566px;top:441px;width:7px;height:1px;background:#a0a0a0"></div>
<div style="left:575px;top:431px;width:9px;height:9px;background:#d0d8d0"></div>
<div style="left:576px;top:441px;width:7px;height:1px;background:#a0a0a0"></div>
<div style="left:586px;top:431px;width:9px;height:9px;background:#202040"></div>
<div style="left:587px;top:441px;width:7px;height:1px;background:#a0a0a0"></div>
<div style="left:596px;top:431px;width:9px;height:9px;background:#f0e8e0"></div>
<div style="left:597px;top:441px;width:7px;height:1px;background:#a0a0a0"></div>
<div style="left:544px;top:446px;width:9px;height:9px;background:#605030"></div>
<div style="left:545px;top:456px;width:7px;height:1px;background:#a0a0a0"></div>
<div style="left:554px;top:446px;width:9px;height:9px;background:#505860"></div>
<div style="left:555px;top:456px;width:7px;height:1px;background:#a0a0a0"></div>
<div style="left:565px;top:446px;width:9px;height:9px;background:#401818"></div>
<div style="left:566px;top:456px;width:7px;height:1px;background:#a0a0a0"></div>
<div style="left:575px;top:446px;width:9px;height:9px;background:#505860"></div>
<div style="left:576px;top:456px;width:7px;height:1px;background:#a0a0a0"></div>
<div style="left:586px;top:446px;width:9px;height:9px;background:#c09080"></div>
<div style="left:587px;top:456px;width:7px;height:1px;background:#a0a0a0"></div>
<div style="left:596px;top:446px;width:9px;height:9px;background:#e0d8b0"></div>
<div style="left:597px;top:456px;width:7px;height:1px;background:#a0a0a0"></div>
<div style="left:544px;top:461px;width:9px;height:9px;background:#f0e8d8"></div>
<div style="left:516px;top:470px;width:94px;height:6px;background:#d4d0c8"></div>
<div style="left:674px;top:422px;width:29px;height:34px;background:#1818d0"></div>
<div style="left:679px;top:424px;width:18px;height:11px;background:#c8c8d8"></div>
<div style="left:690px;top:426px;width:5px;height:7px;background:#1818d0"></div>
<div style="left:677px;top:438px;width:22px;height:16px;background:repeating-linear-gradient(to bottom,#fff 0,#fff 2px,#1818d0 2px,#1818d0 3px)"></div>
<div style="left:43px;top:554px;width:42px;height:34px;background:#000;border-radius:3px"></div>
<div style="left:46px;top:557px;width:36px;height:28px;background:#101010"></div>
<div style="left:51px;top:559px;width:12px;height:20px;background:linear-gradient(45deg,rgba(0,0,0,0) 40%,#e02020 40%,#e02020 55%,rgba(0,0,0,0) 55%)"></div>
<div style="left:56px;top:558px;width:4px;height:20px;background:#e0e020;transform:rotate(-50deg)"></div>
<div style="left:66px;top:560px;width:3px;height:20px;background:#20d020"></div>
<div style="left:61px;top:570px;width:14px;height:3px;background:#2040f0"></div>
<div style="left:39px;top:590px;width:48px;height:13px;background:#c8c8c8;border:1px solid #000;border-radius:2px"></div>
<div style="left:47px;top:595px;width:12px;height:1px;background:#404040"></div>
<div style="left:158px;top:532px;width:60px;height:94px;background:#e4e4e4"></div>
<svg style="left:158px;top:532px" width="60" height="94" viewBox="0 0 60 94"><path d="M16 22 Q20 4 36 3 Q52 4 54 22 L50 30 Q40 22 28 24 Z" fill="#8a0c0c"/><path d="M14 18 L18 28 L10 52 L4 48 Z" fill="#a01010"/><g stroke="#5a1414" stroke-width="2.2" fill="none" stroke-linecap="round"><path d="M20 26 Q14 50 12 78"/><path d="M24 28 Q20 55 22 88"/><path d="M27 30 Q28 60 34 92"/><path d="M44 38 Q40 65 46 88"/><path d="M50 28 Q54 50 52 80"/><path d="M54 30 Q58 55 62 76"/><path d="M17 40 Q18 65 28 84"/><path d="M38 46 Q36 70 40 90"/><path d="M48 50 Q50 70 56 84"/></g><path d="M28 26 Q40 20 50 28 L48 46 Q40 54 32 48 Q27 40 28 26 Z" fill="#e8c4c4"/><path d="M31 33 L37 33 M42 34 L47 33" stroke="#202020" stroke-width="2"/></svg>
<div style="left:273px;top:532px;width:79px;height:94px;background:#000"></div>
<svg style="left:273px;top:532px" width="79" height="94" viewBox="0 0 79 94"><path d="M5.6 16 L22 19 L20 28 Z M53.4 9.3 L44 22 L48 27 Z" fill="#0000f0" stroke="#20e060" stroke-width="1"/><path d="M21 38 Q18 48 22 58 Q30 68 38 65 Q48 62 50 48 Q50 36 46 32 Q34 30 21 38 Z" fill="#0000f0" stroke="#20c0f0" stroke-width="1"/><path d="M21 50 Q22 62 36 66 Q42 64 46 58 Q34 60 21 50 Z" fill="#f000f0"/><ellipse cx="33.5" cy="26" rx="15" ry="10.5" fill="#0000f0" stroke="#20c0f0" stroke-width="1"/><circle cx="23.5" cy="9.3" r="7.5" fill="#0000f0" stroke="#20c0f0" stroke-width="1"/><circle cx="42" cy="7" r="5.5" fill="#0000f0" stroke="#20c0f0" stroke-width="1"/><path d="M29 23 L33 30 L35 23" fill="#20c0f0"/><path d="M20.2 39.8 L8.2 59.7 M3 58 L12 58 M8 60 L10 66 M8 60 L15 65 M27.5 64 V84.6 H20.8" stroke="#e020e0" stroke-width="1.2" fill="none"/><path d="M49.4 35.8 L64 55.8 M60 54 L67 54 M63 55 L61 60 M42.7 64 V84.6 H49.4" stroke="#20d040" stroke-width="1.2" fill="none"/></svg>
<svg style="left:413px;top:554px" width="46" height="46" viewBox="0 0 38 38"><path d="M1 1 H18 L23 6 V37 H1 Z" fill="#e8f4fc" stroke="#7090d0" stroke-width="0.8"/><path d="M18 1 L23 6 H18 Z" fill="#40a0e0"/><path d="M6 10 Q8 8 12 9 H35 L36 12 V30 L33 32 H6 Q5 30 5 28 Z" fill="#c8d8ec" stroke="#5870a0" stroke-width="0.8"/><rect x="5" y="11" width="5" height="20" fill="#405090"/><path d="M33 10 L36 12 V30 L33 32 Z" fill="#7088b0"/><circle cx="20" cy="22" r="6.5" fill="#d0d8e8" stroke="#8090b0" stroke-width="0.8"/><circle cx="20" cy="22" r="5" fill="#2a1830"/><circle cx="19" cy="21" r="2.5" fill="#9a6080"/><circle cx="23" cy="13.5" r="1.5" fill="none" stroke="#202020" stroke-width="0.8"/><rect x="27" y="12" width="7" height="3.5" fill="#f0f0f0" stroke="#303030" stroke-width="0.8"/></svg>
</div>
<svg style="left:520px;top:295px" width="130" height="165" viewBox="0 0 130 165"><defs><pattern id="hs" width="3" height="18" patternUnits="userSpaceOnUse" patternTransform="translate(22,108.5) rotate(-45)"><rect width="3" height="18" fill="none"/></pattern><linearGradient id="hg" x1="0" y1="0" x2="0" y2="1"><stop offset="0" stop-color="#c08030"/><stop offset=".12" stop-color="#e8a848"/><stop offset=".3" stop-color="#f8b858"/><stop offset=".45" stop-color="#d89840"/><stop offset=".6" stop-color="#f8c060"/><stop offset=".8" stop-color="#e8a848"/><stop offset="1" stop-color="#b87830"/></linearGradient></defs><path d="M105 103 H120 V107 L117 112 V122 H118 V147 L107 158 V135.5 H35 Q31 135.5 31 131 V122 H110 V112 L105 107 Z" fill="rgba(0,0,0,0.2)"/><g transform="translate(22,108.5) rotate(-45)"><rect x="-9" y="-9" width="105" height="18" rx="9" fill="url(#hg)"/></g><path d="M70.3 26 L81.25 18.2 L109.9 46.9 L104.2 53.6 Z" fill="#b8d0e0"/><path d="M70.3 26 L104.2 53.6 L111.5 70.8 L71.4 30.2 Z" fill="#98b0c0"/><path d="M109.9 46.9 L117.7 62.5 L111.5 70.8 L104.2 53.6 Z" fill="#6a8292"/><path d="M61.5 23.4 L75 9.4 L78.1 13 L77.6 14.6 L70.3 24.5 L65.6 26 Z" fill="#687888"/><path d="M64 22 L74 12 L76 14 L68 23 Z" fill="#c0d8e8"/><g transform="translate(91.1,33.9) rotate(45)"><rect x="-5.5" y="-3.2" width="11" height="6.4" rx="3.2" fill="#c8903a"/></g></svg>
<div style="left:1007px;top:88px;width:17px;height:650px;background:#fdfdfd;border-left:1px solid #e8e8e8"></div>
<div style="left:1008px;top:89px;width:15px;height:15px;background:linear-gradient(135deg,#d8ecfc,#b0d0f8);border:1px solid #fff;border-radius:2px;box-shadow:0 1px 0 #a0b8e0"></div>
<svg style="left:1010px;top:92px" width="11" height="9"><path d="M1.5 7 L5.5 3 L9.5 7" stroke="#4d6185" stroke-width="2.2" fill="none"/></svg>
<div style="left:1009px;top:133px;width:14px;height:587px;background:linear-gradient(to right,#d0ecfc 0,#d0ecfc 9px,#a0c0f8 9px,#a0c0f8 12px,#fff 12px);border-left:1px solid #b0c8e0;border-radius:2px"></div>
<div style="left:1012px;top:422px;width:6px;height:1px;background:#90b8f0"></div>
<div style="left:1012px;top:424px;width:6px;height:1px;background:#90b8f0"></div>
<div style="left:1012px;top:426px;width:6px;height:1px;background:#90b8f0"></div>
<div style="left:1012px;top:428px;width:6px;height:1px;background:#90b8f0"></div>
<div style="left:1008px;top:722px;width:15px;height:15px;background:linear-gradient(135deg,#d8ecfc,#b0d0f8);border:1px solid #fff;border-radius:2px;box-shadow:0 -1px 0 #a0b8e0"></div>
<svg style="left:1010px;top:726px" width="11" height="9"><path d="M1.5 2 L5.5 6 L9.5 2" stroke="#4d6185" stroke-width="2.2" fill="none"/></svg>
<div id="task"></div>
<div style="left:0;top:738px;width:96px;height:30px;background:linear-gradient(to bottom,#3a8a3a 0,#90b090 3px,#58a058 5px,#489848 50%,#3c883c 90%,#2a702a 100%);border-radius:0 12px 12px 0"></div>
<div style="left:0;top:738px;width:96px;height:30px;border-radius:0 12px 12px 0;box-shadow:inset -5px 0 4px -2px #2a6a2a, inset 2px 0 0 #306a30"></div>
<div style="left:4px;top:740px;width:76px;height:3px;background:#98b898;border-radius:2px"></div>
<div style="left:12px;top:744px;width:16px;height:16px;transform:skewY(-8deg)"><div style="left:0;top:0;width:7px;height:7px;background:#f05020"></div><div style="left:8px;top:1px;width:7px;height:7px;background:#60c020"></div><div style="left:-1px;top:8px;width:7px;height:7px;background:#4070f0"></div><div style="left:7px;top:9px;width:7px;height:7px;background:#f8c000"></div></div>
<div class="t" style="left:34px;top:743px;font-size:17px;font-weight:bold;font-style:italic;color:#fff;line-height:20px;text-shadow:1px 1px 1px #203020">start</div>
<div style="left:106px;top:741px;width:160px;height:25px;background:#0050a8;border:1px solid #003890;border-radius:2px"></div>
<svg style="left:116px;top:745px" width="18" height="15" viewBox="0 0 18 15"><path d="M1.5 3 Q1.5 1.5 3 1.5 H7 L8.5 3 H14 Q15.5 3 15.5 4.5 V12.5 Q15.5 14 14 14 H3 Q1.5 14 1.5 12.5 Z" fill="#f0c040" stroke="#b07800"/><path d="M2 6 H15 V12.5 Q15 13.5 14 13.5 H3 Q2 13.5 2 12.5 Z" fill="#ffe070"/><path d="M2.5 6.5 H14.5" stroke="#fff8c0"/></svg>
<div class="t" style="left:137px;top:747px;color:#fff">junk</div>
<div style="left:266px;top:741px;width:159px;height:24px;background:#0078f0;border:1px solid #6060e0;border-radius:3px"></div>
<div style="left:276px;top:746px;width:15px;height:12px;background:#108080;border:2px solid #303030;border-radius:1px"></div><div style="left:280px;top:758px;width:7px;height:3px;background:#202020"></div>
<div class="t" style="left:296px;top:747px;color:#fff">[0/60] Grabby - Runn...</div>
<div style="left:815px;top:747px;width:13px;height:13px;background:#fff8a0;border:1px solid #202020;font-weight:bold;font-size:11px;line-height:11px;text-align:center;color:#101050">?</div>
<div style="left:842px;top:745px;width:6px;height:5px;border:1px solid #fff"></div><div style="left:840px;top:748px;width:6px;height:5px;border:1px solid #fff;background:#3838c8"></div>
<svg style="left:841px;top:758px" width="7" height="4"><path d="M0 0 L7 0 L3.5 4 Z" fill="#fff"/></svg>
<div style="left:858px;top:740px;width:80px;height:26px;background:linear-gradient(to bottom,#fff080 0,#fff080 1px,#fcb028 1px,#fcb028 20px,#fff000 20px)"></div>
<div style="left:864px;top:743px;width:19px;height:19px;border-radius:50%;background:radial-gradient(circle at 40% 30%,#a0e060,#20a020 60%,#108010)"></div>
<svg style="left:866px;top:746px" width="15" height="13"><path d="M2 7 L6 11 L13 2" stroke="#fff" stroke-width="3" fill="none"/></svg>
<div class="t" style="left:889px;top:746px;font-size:12px;color:#101000;line-height:14px;letter-spacing:0.2px">Norton</div><div class="t" style="left:925px;top:745px;font-size:8px;color:#101000;line-height:9px;font-weight:bold">TM</div>
<div style="left:949px;top:738px;width:75px;height:30px;background:linear-gradient(to bottom,#3050d0 0,#3050d0 1px,#10b8f8 1px,#10b8f8 3px,#0aa0e0 3px,#0aa0e0 29px,#0878c0 29px);border-left:1px solid #003880"></div>
<div style="left:941px;top:745px;width:18px;height:18px;border-radius:50%;background:linear-gradient(135deg,#80d0f8,#2080e0);border:1px solid #4060a0"></div>
<svg style="left:945px;top:749px" width="10" height="10"><path d="M7 1 L3 5 L7 9" stroke="#fff" stroke-width="2.2" fill="none"/></svg>
<div class="t" style="left:966px;top:747px;color:#fff;letter-spacing:-0.4px">12:16 PM</div>
</body></html>
